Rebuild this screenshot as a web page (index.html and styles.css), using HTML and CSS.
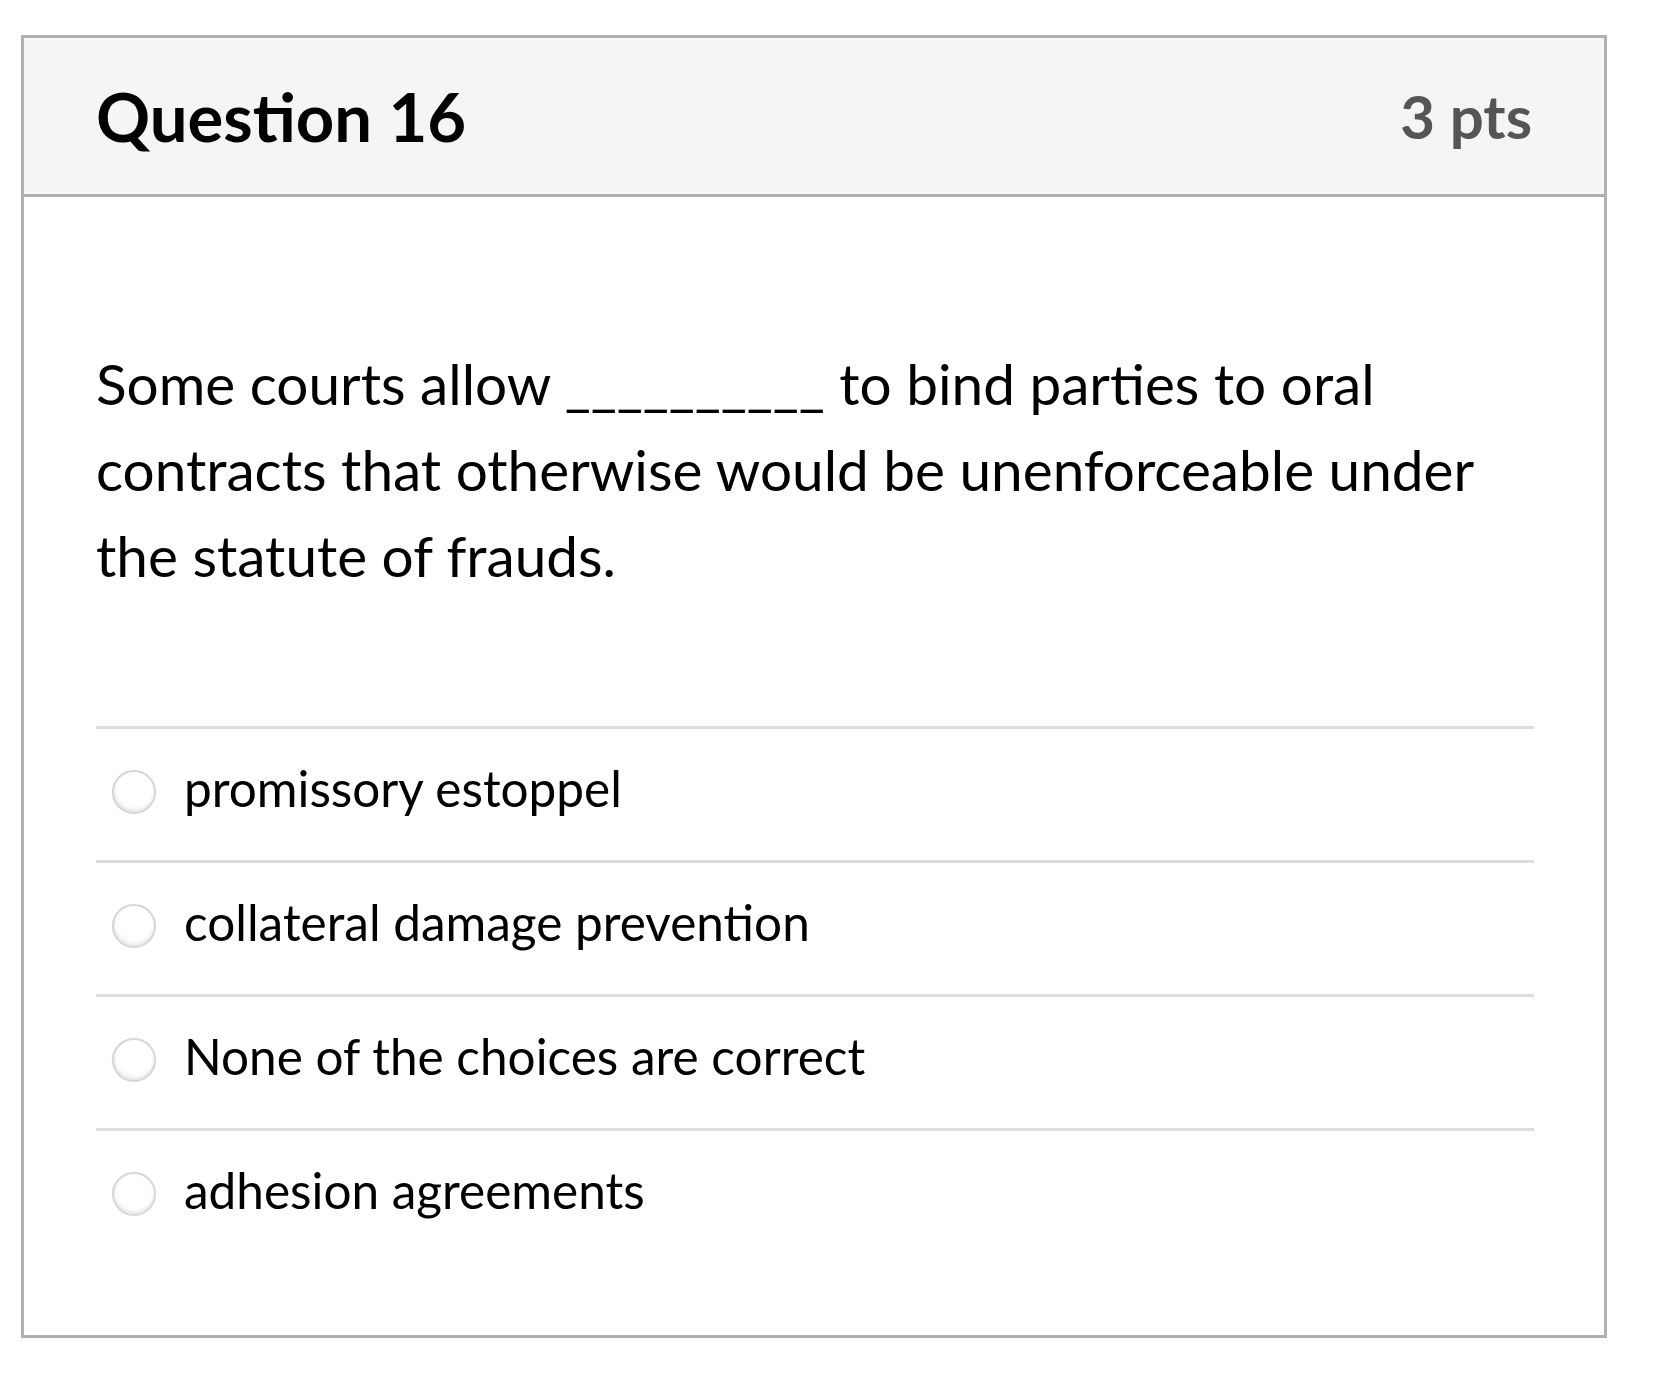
FILE: index.html
```html
<!DOCTYPE html>
<html>
<head>
<meta charset="utf-8">
<link rel="stylesheet" href="styles.css">
</head>
<body>
<div class="question">
  <div class="header">
    <span class="name">Question 16</span>
    <span class="pts">3 pts</span>
  </div>
  <div class="content">
    <p class="text">Some courts allow __________ to bind parties to oral contracts that otherwise would be unenforceable under the statute of frauds.</p>
    <div class="answers">
      <div class="answer"><span class="radio"></span><span class="label">promissory estoppel</span></div>
      <div class="answer"><span class="radio"></span><span class="label">collateral damage prevention</span></div>
      <div class="answer"><span class="radio"></span><span class="label">None of the choices are correct</span></div>
      <div class="answer"><span class="radio"></span><span class="label">adhesion agreements</span></div>
    </div>
  </div>
</div>
</body>
</html>
```

FILE: styles.css
```css
html, body {
  margin: 0;
  padding: 0;
  background: #ffffff;
}
body {
  font-family: Lato, "Open Sans", sans-serif;
  color: #000;
}
.question {
  margin: 35px 0 0 21px;
  width: 1586px;
  box-sizing: border-box;
  border: 3px solid #b0b0b0;
  background: #fff;
}
.header {
  height: 159px;
  box-sizing: border-box;
  background: #f5f5f5;
  border-bottom: 3px solid #b0b0b0;
  display: flex;
  align-items: center;
  justify-content: space-between;
  padding: 0 72px;
}
.name {
  font-weight: 700;
  font-size: 67px;
  color: #000;
}
.pts {
  font-weight: 700;
  font-size: 60px;
  color: #555555;
}
.content {
  padding: 143px 70px 73px 72px;
}
.text {
  margin: 0 0 128px 0;
  font-size: 56.7px;
  line-height: 86px;
}
.answers {
  display: flex;
  flex-direction: column;
}
.answer {
  border-top: 3px solid #dddddd;
  height: 131px;
  display: flex;
  align-items: center;
  padding-left: 16px;
}
.radio {
  width: 40px;
  height: 40px;
  border-radius: 50%;
  border: 2px solid #d6d6d6;
  background: radial-gradient(circle at 55% 40%, #ffffff 50%, #eeeeee 100%);
  box-shadow: inset 0 -2px 3px rgba(0,0,0,0.07), 0 0 1px rgba(0,0,0,0.12);
  flex: none;
  position: relative;
  top: -3px;
}
.label {
  margin-left: 28px;
  font-size: 49.5px;
  line-height: 1;
  position: relative;
  top: -6px;
}
```
